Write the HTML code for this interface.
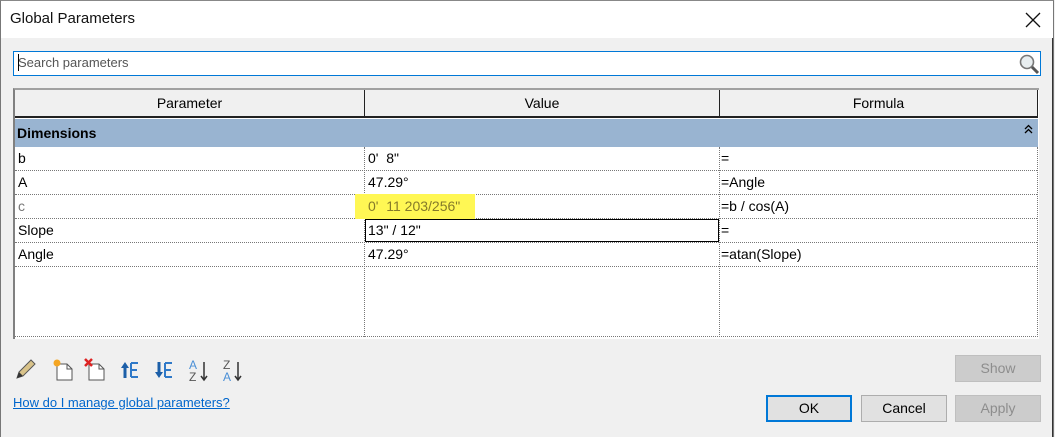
<!DOCTYPE html>
<html><head><meta charset="utf-8"><style>
*{margin:0;padding:0;box-sizing:border-box}
body{width:1055px;height:437px;background:#f0f0f0;font-family:"Liberation Sans",sans-serif;font-size:14px;color:#000;position:relative;overflow:hidden}
.a{position:absolute}
.win{left:0;top:0;width:1054px;height:437px;border-left:1px solid #777;border-top:1px solid #888;border-right:1px solid #777}
.title{left:1px;top:1px;width:1052px;height:37px;background:#fff}
.cell{position:absolute;height:24px;line-height:23px;padding-left:3px;white-space:nowrap;font-size:14px}
.hl{border-bottom:1px dotted #777}
.btn{position:absolute;height:27px;border:1px solid #adadad;background:#e1e1e1;text-align:center;line-height:25px;font-size:14px}
.dis{background:#cccccc;border-color:#bfbfbf;color:#8d8d8d}
</style></head><body>
<div class="a win"></div>
<div class="a title"></div>
<div class="a" style="left:10px;top:10px;font-size:15px;color:#111">Global Parameters</div>
<svg class="a" style="left:1025px;top:12px" width="16" height="16"><path d="M1 1L15 15M15 1L1 15" stroke="#111" stroke-width="1.3"/></svg>
<div class="a" style="left:1052px;top:38px;width:1px;height:399px;background:#333"></div>

<div class="a" style="left:13px;top:51px;width:1028px;height:25px;background:#fff;border:1px solid #0078d7"></div>
<div class="a" style="left:18px;top:55px;font-size:13px;color:#555">Search parameters</div>
<div class="a" style="left:18px;top:54px;width:1px;height:17px;background:#000"></div>
<svg class="a" style="left:1018px;top:53px" width="22" height="22"><circle cx="9" cy="9" r="6.5" fill="#e8eef0" stroke="#777" stroke-width="1.6"/><path d="M14 14L20 20" stroke="#555" stroke-width="3"/></svg>

<div class="a" style="left:13px;top:88px;width:1026px;height:251px;background:#fff;border-left:2px solid #808080;border-top:2px solid #a0a0a0"></div>
<div class="a" style="left:15px;top:90px;width:1022px;height:28px;background:#f0f0f0;border-bottom:2px solid #222"></div>
<div class="a" style="left:364px;top:90px;width:1px;height:28px;background:#222"></div>
<div class="a" style="left:719px;top:90px;width:1px;height:28px;background:#222"></div>
<div class="a" style="left:1037px;top:90px;width:1px;height:28px;background:#222"></div>
<div class="a" style="left:15px;top:95px;width:349px;text-align:center">Parameter</div>
<div class="a" style="left:365px;top:95px;width:354px;text-align:center">Value</div>
<div class="a" style="left:720px;top:95px;width:317px;text-align:center">Formula</div>
<div class="a" style="left:15px;top:119px;width:1023px;height:28px;background:#99b4d1"></div>
<div class="a" style="left:17px;top:125px;font-weight:bold">Dimensions</div>
<svg class="a" style="left:1024px;top:124px" width="9" height="10"><path d="M1 5L4.5 1.5L8 5M1 9L4.5 5.5L8 9" stroke="#000" stroke-width="1.3" fill="none"/></svg>
<div class="a" style="left:364px;top:147px;height:190px;border-left:1px dotted #777"></div>
<div class="a" style="left:719px;top:147px;height:190px;border-left:1px dotted #777"></div>
<div class="a" style="left:1037px;top:147px;height:190px;border-left:1px dotted #777"></div>
<div class="a" style="left:15px;top:336px;width:1023px;border-top:1px dotted #777"></div>
<div class="a hl" style="left:15px;top:147px;width:1022px;height:24px"></div>
<div class="a hl" style="left:15px;top:171px;width:1022px;height:24px"></div>
<div class="a hl" style="left:15px;top:195px;width:1022px;height:24px"></div>
<div class="a hl" style="left:15px;top:219px;width:1022px;height:24px"></div>
<div class="a hl" style="left:15px;top:243px;width:1022px;height:24px"></div>
<div class="a" style="left:355px;top:194px;width:120px;height:25px;background:#fff754"></div>
<div class="a" style="left:365px;top:219px;width:354px;height:23px;border:1px solid #000"></div>

<div class="cell" style="left:15px;top:147px">b</div>
<div class="cell" style="left:365px;top:147px">0'&nbsp; 8"</div>
<div class="cell" style="left:718px;top:147px">=</div>
<div class="cell" style="left:15px;top:171px">A</div>
<div class="cell" style="left:365px;top:171px">47.29°</div>
<div class="cell" style="left:718px;top:171px">=Angle</div>
<div class="cell" style="left:15px;top:195px;color:#777">c</div>
<div class="cell" style="left:365px;top:195px;color:#857a2a">0'&nbsp; 11 203/256"</div>
<div class="cell" style="left:718px;top:195px">=b / cos(A)</div>
<div class="cell" style="left:15px;top:219px">Slope</div>
<div class="cell" style="left:365px;top:219px">13" / 12"</div>
<div class="cell" style="left:718px;top:219px">=</div>
<div class="cell" style="left:15px;top:243px">Angle</div>
<div class="cell" style="left:365px;top:243px">47.29°</div>
<div class="cell" style="left:718px;top:243px">=atan(Slope)</div>

<svg class="a" style="left:14px;top:358px" width="240" height="24">
<path d="M3 20L5 14L17 2L21 6L9 18Z" fill="#d9c38a" stroke="#555" stroke-width="1"/><path d="M3 20L5 14L9 18Z" fill="#333"/>
<g transform="translate(38,0)"><path d="M5 6H15L20 11V22H5Z" fill="#fff" stroke="#555"/><path d="M15 6V11H20" fill="none" stroke="#555"/><circle cx="5" cy="5" r="3.5" fill="#f5a623"/></g>
<g transform="translate(70,0)"><path d="M5 6H15L20 11V22H5Z" fill="#fff" stroke="#555"/><path d="M15 6V11H20" fill="none" stroke="#555"/><path d="M1 1L8 8M8 1L1 8" stroke="#d22" stroke-width="2.5"/></g>
<g transform="translate(106,0)"><path d="M5 4L1 10H3.5V20H6.5V10H9Z" fill="#1c5fa8"/><path d="M11 5H18M11 12H17M11 19H18M11 5V19" stroke="#2f79c8" stroke-width="2" fill="none"/></g>
<g transform="translate(140,0)"><path d="M5 20L1 14H3.5V4H6.5V14H9Z" fill="#1c5fa8"/><path d="M11 5H18M11 12H17M11 19H18M11 5V19" stroke="#2f79c8" stroke-width="2" fill="none"/></g>
<text x="175" y="11" font-size="12" fill="#4a8fd6" font-family="Liberation Sans">A</text><text x="175" y="23" font-size="12" fill="#555" font-family="Liberation Sans">Z</text><path d="M190 4V21M187 18L190 22L193 18" stroke="#333" stroke-width="1.5" fill="none"/>
<text x="209" y="11" font-size="12" fill="#555" font-family="Liberation Sans">Z</text><text x="209" y="23" font-size="12" fill="#4a8fd6" font-family="Liberation Sans">A</text><path d="M224 4V21M221 18L224 22L227 18" stroke="#333" stroke-width="1.5" fill="none"/>
</svg>

<div class="a" style="left:13px;top:395px;font-size:13px;color:#0066cc;text-decoration:underline">How do I manage global parameters?</div>

<div class="btn dis" style="left:955px;top:355px;width:86px">Show</div>
<div class="btn" style="left:766px;top:395px;width:86px;border:2px solid #0078d7;line-height:23px">OK</div>
<div class="btn" style="left:861px;top:395px;width:86px">Cancel</div>
<div class="btn dis" style="left:955px;top:395px;width:86px">Apply</div>
</body></html>
